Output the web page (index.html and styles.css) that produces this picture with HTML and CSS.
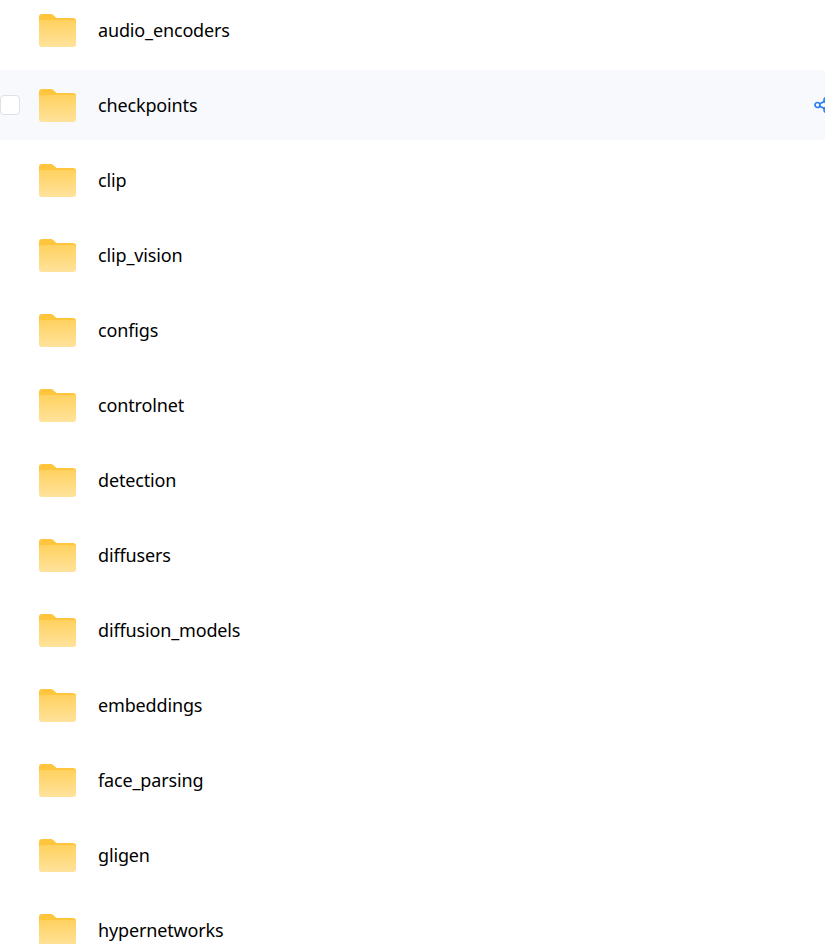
FILE: index.html
```html
<!DOCTYPE html>
<html lang="en">
<head>
  <meta charset="UTF-8" />
  <title>Files</title>
  <link rel="stylesheet" href="styles.css">
</head>
<body>
  <svg class="defs" width="0" height="0">
    <defs>
      <linearGradient id="folderFront" x1="0" y1="0" x2="0" y2="1">
        <stop offset="0" stop-color="#ffd15f"/>
        <stop offset="1" stop-color="#ffe39c"/>
      </linearGradient>
      <symbol id="folder" viewBox="0 0 37 33">
        <path d="M0 3a3 3 0 0 1 3-3h8.500c1.500 0 2.500.6 3.500 1.700L17.500 4H34a3 3 0 0 1 3 3v6H0z" fill="#ffc53d"/>
        <rect x="0" y="6" width="37" height="27" rx="3" fill="url(#folderFront)"/>
      </symbol>
    </defs>
  </svg>

  <ul class="file-list">
    <li class="file-row"><svg class="folder-icon"><use href="#folder"/></svg><span class="file-name">audio_encoders</span></li>
    <li class="file-row active">
      <span class="checkbox"></span>
      <svg class="folder-icon"><use href="#folder"/></svg><span class="file-name">checkpoints</span>
      <svg class="share-icon" viewBox="0 0 16 16" fill="none" stroke="#2b7ff6" stroke-width="1.700">
        <circle cx="3.500" cy="8" r="2.500"/>
        <circle cx="12.500" cy="3.200" r="2.500"/>
        <circle cx="12.500" cy="12.800" r="2.500"/>
        <path d="M5.700 6.800l4.600-2.400M5.700 9.200l4.600 2.400"/>
      </svg>
    </li>
    <li class="file-row"><svg class="folder-icon"><use href="#folder"/></svg><span class="file-name">clip</span></li>
    <li class="file-row"><svg class="folder-icon"><use href="#folder"/></svg><span class="file-name">clip_vision</span></li>
    <li class="file-row"><svg class="folder-icon"><use href="#folder"/></svg><span class="file-name">configs</span></li>
    <li class="file-row"><svg class="folder-icon"><use href="#folder"/></svg><span class="file-name">controlnet</span></li>
    <li class="file-row"><svg class="folder-icon"><use href="#folder"/></svg><span class="file-name">detection</span></li>
    <li class="file-row"><svg class="folder-icon"><use href="#folder"/></svg><span class="file-name">diffusers</span></li>
    <li class="file-row"><svg class="folder-icon"><use href="#folder"/></svg><span class="file-name">diffusion_models</span></li>
    <li class="file-row"><svg class="folder-icon"><use href="#folder"/></svg><span class="file-name">embeddings</span></li>
    <li class="file-row"><svg class="folder-icon"><use href="#folder"/></svg><span class="file-name">face_parsing</span></li>
    <li class="file-row"><svg class="folder-icon"><use href="#folder"/></svg><span class="file-name">gligen</span></li>
    <li class="file-row"><svg class="folder-icon"><use href="#folder"/></svg><span class="file-name">hypernetworks</span></li>
  </ul>
</body>
</html>
```

FILE: styles.css
```css
html,
body {
  height: 100%;
  overflow: hidden;
}

body {
  margin: 0;
  background-color: #fff;
  color: #000;
  font-family: 'Noto Sans', 'Noto Sans CJK SC', sans-serif;
  font-size: 18px;
  letter-spacing: -0.15px;
}

.defs {
  display: block;
  height: 0;
}

.file-list {
  list-style: none;
  margin: -5px 0 0;
  padding: 0;
  display: flex;
  flex-direction: column;
  gap: 5px;
}

.file-row {
  position: relative;
  display: flex;
  align-items: center;
  flex-shrink: 0;
  height: 70px;
  padding-left: 39px;
}

.file-row.active {
  background-color: #f7f9fc;
}

.checkbox {
  position: absolute;
  left: 0;
  top: 25px;
  width: 18px;
  height: 18px;
  background-color: #fff;
  border: 1px solid #dfe0e8;
  border-radius: 4px;
}

.folder-icon {
  width: 37px;
  height: 33px;
  margin-right: 22px;
  flex-shrink: 0;
}

.file-name {
  line-height: 24px;
}

.share-icon {
  position: absolute;
  left: 814px;
  top: 27px;
  width: 16px;
  height: 16px;
}
```
